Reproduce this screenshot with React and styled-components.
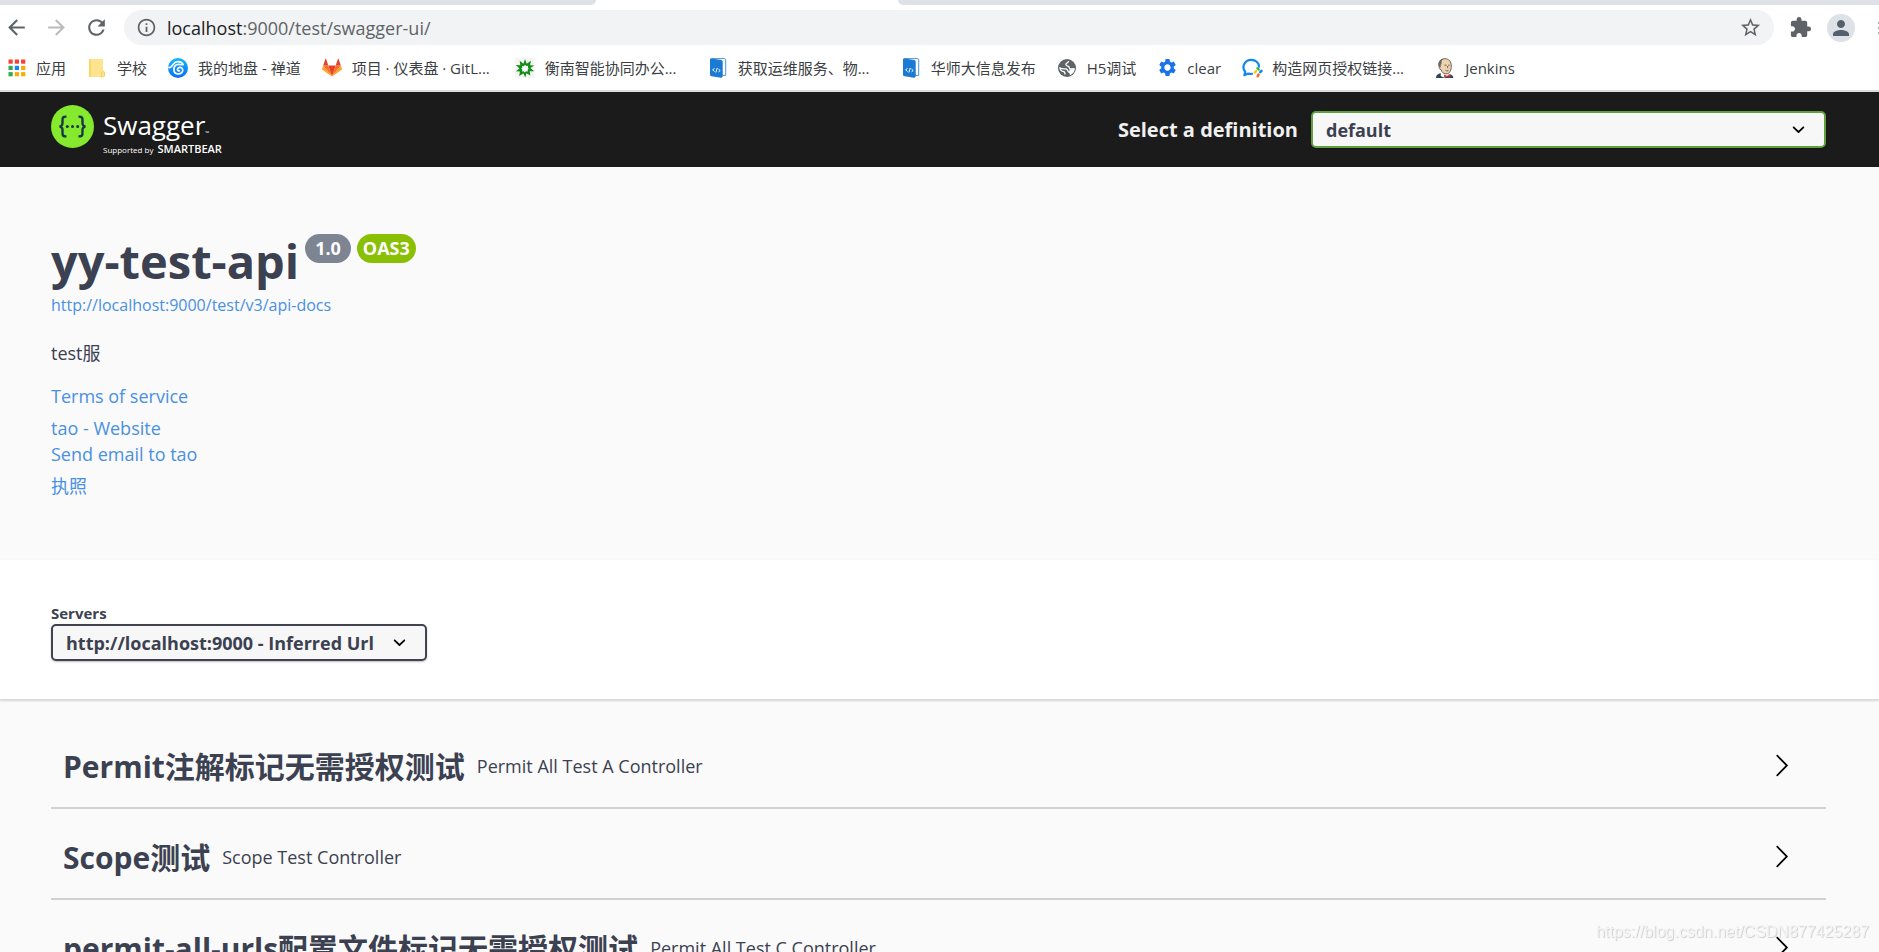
import styled, { createGlobalStyle } from 'styled-components'
import {
  MdArrowBack,
  MdArrowForward,
  MdExtension,
  MdInfoOutline,
  MdMoreVert,
  MdPerson,
  MdRefresh,
  MdSettings,
  MdStarBorder,
} from 'react-icons/md'

const TAGS = [
  { name: 'Permit注解标记无需授权测试', description: 'Permit All Test A Controller' },
  { name: 'Scope测试', description: 'Scope Test Controller' },
  { name: 'permit-all-urls配置文件标记无需授权测试', description: 'Permit All Test C Controller' },
]

const BOOKMARKS = [
  { label: '应用', icon: <AppsIcon /> },
  { label: '学校', icon: <FolderIcon /> },
  { label: '我的地盘 - 禅道', icon: <ZentaoIcon /> },
  { label: '项目 · 仪表盘 · GitL...', icon: <GitlabIcon />, clipped: true },
  { label: '衡南智能协同办公...', icon: <StarburstIcon />, clipped: true },
  { label: '获取运维服务、物...', icon: <BookIcon />, clipped: true },
  { label: '华师大信息发布', icon: <BookIcon /> },
  { label: 'H5调试', icon: <GlobeIcon /> },
  { label: 'clear', icon: <MdSettings color="#1a73e8" size={21} /> },
  { label: '构造网页授权链接...', icon: <WecomIcon />, clipped: true },
  { label: 'Jenkins', icon: <JenkinsIcon /> },
]

export default function App() {
  return (
    <Browser>
      <GlobalStyle />
      <TabStrip>
        <TabsBefore />
        <ActiveTab />
        <TabsAfter />
      </TabStrip>
      <Toolbar>
        <ToolButton aria-label="Back">
          <MdArrowBack size={25} />
        </ToolButton>
        <ToolButton aria-label="Forward" disabled>
          <MdArrowForward size={25} />
        </ToolButton>
        <ToolButton aria-label="Reload">
          <MdRefresh size={25} />
        </ToolButton>
        <AddressBar>
          <MdInfoOutline size={21} />
          <Address>
            <Host>localhost</Host>:9000/test/swagger-ui/
          </Address>
          <ToolButton aria-label="Bookmark this page">
            <MdStarBorder size={23} />
          </ToolButton>
        </AddressBar>
        <ToolButton aria-label="Extensions">
          <MdExtension size={23} />
        </ToolButton>
        <Avatar aria-label="Profile">
          <MdPerson size={24} />
        </Avatar>
        <ToolButton aria-label="Menu">
          <MdMoreVert size={20} />
        </ToolButton>
      </Toolbar>
      <BookmarksBar>
        {BOOKMARKS.map(({ label, icon, clipped }) => (
          <Bookmark key={label} href="#">
            <BookmarkIcon>{icon}</BookmarkIcon>
            <BookmarkLabel $clipped={clipped}>{label}</BookmarkLabel>
          </Bookmark>
        ))}
      </BookmarksBar>
      <Page>
        <Topbar>
          <TopbarWrapper>
            <Logo href="#" aria-label="Swagger">
              <SwaggerMark />
              <LogoText>
                <LogoName>
                  Swagger<Trademark>™</Trademark>
                </LogoName>
                <Supported>
                  Supported by <SmartBear>SMARTBEAR</SmartBear>
                </Supported>
              </LogoText>
            </Logo>
            <Definition>
              <DefinitionLabel htmlFor="definition">
                Select a definition
              </DefinitionLabel>
              <SelectBox $grow>
                <Select id="definition" $color="#62a03f">
                  <option>default</option>
                </Select>
                <SelectArrow />
              </SelectBox>
            </Definition>
          </TopbarWrapper>
        </Topbar>
        <Info>
          <Wrapper>
            <TitleRow>
              <Title>yy-test-api</Title>
              <Badge $color="#7d8492" $padding="10px">1.0</Badge>
              <Badge $color="#89bf04" $padding="6px">OAS3</Badge>
            </TitleRow>
            <SpecLink href="#">http://localhost:9000/test/v3/api-docs</SpecLink>
            <Description>test服</Description>
            <InfoLinks>
              <InfoLink href="#">Terms of service</InfoLink>
              <Contact>
                <InfoLink href="#">tao - Website</InfoLink>
                <InfoLink href="#">Send email to tao</InfoLink>
              </Contact>
              <InfoLink href="#">执照</InfoLink>
            </InfoLinks>
          </Wrapper>
        </Info>
        <Scheme>
          <Wrapper>
            <ServersLabel htmlFor="servers">Servers</ServersLabel>
            <SelectBox>
              <Select id="servers" $color="#41444e">
                <option>http://localhost:9000 - Inferred Url</option>
              </Select>
              <SelectArrow />
            </SelectBox>
          </Wrapper>
        </Scheme>
        <Operations>
          <Wrapper>
            {TAGS.map(({ name, description }) => (
              <TagRow key={name}>
                <TagName>{name}</TagName>
                <TagDescription>{description}</TagDescription>
                <ExpandButton aria-label="Expand operation">
                  <LargeArrow />
                </ExpandButton>
              </TagRow>
            ))}
          </Wrapper>
        </Operations>
      </Page>
      <Watermark>https://blog.csdn.net/CSDN877425287</Watermark>
    </Browser>
  )
}

function SelectArrow() {
  return (
    <ArrowSvg viewBox="0 0 20 20" aria-hidden="true">
      <path d="M13.418 7.859c.271-.268.709-.268.978 0 .27.268.272.701 0 .969l-3.908 3.83c-.27.268-.707.268-.979 0l-3.908-3.83c-.27-.267-.27-.701 0-.969.271-.268.709-.268.978 0L10 11l3.418-3.141z" />
    </ArrowSvg>
  )
}

function LargeArrow() {
  return (
    <svg width="25" height="25" viewBox="0 0 20 20">
      <path d="M13.25 10L6.109 2.58c-.268-.27-.268-.707 0-.979.268-.27.701-.27.969 0l7.83 7.908c.268.271.268.709 0 .979l-7.83 7.908c-.268.271-.701.27-.969 0-.268-.269-.268-.707 0-.979L13.25 10z" />
    </svg>
  )
}

function SwaggerMark() {
  return (
    <svg width="43" height="43" viewBox="0 0 43 43">
      <circle cx="21.5" cy="21.5" r="21.5" fill="#85ea2d" />
      <g fill="none" stroke="#173647" strokeWidth="2.4">
        <path d="M15.5 11.6c-3.4-.2-4.2 1-4 4 .2 3.4.1 5.4-2.9 5.9 3 .5 3.1 2.5 2.9 5.9-.2 3 .6 4.2 4 4" />
        <path d="M27.5 11.6c3.4-.2 4.2 1 4 4-.2 3.4-.1 5.4 2.9 5.9-3 .5-3.1 2.5-2.9 5.9.2 3-.6 4.2-4 4" />
      </g>
      <g fill="#173647">
        <circle cx="16.3" cy="21.5" r="1.5" />
        <circle cx="21.5" cy="21.5" r="1.5" />
        <circle cx="26.7" cy="21.5" r="1.5" />
      </g>
    </svg>
  )
}

function AppsIcon() {
  const colors = [
    '#f44336', '#f44336', '#f44336',
    '#34a853', '#1a85f2', '#fbab05',
    '#34a853', '#fbab05', '#fbab05',
  ]
  return (
    <svg width="20" height="20" viewBox="0 0 20 20">
      {colors.map((fill, i) => (
        <rect
          key={i}
          x={2.5 + (i % 3) * 6.3}
          y={1.5 + Math.floor(i / 3) * 6.3}
          width="4.2"
          height="4.2"
          fill={fill}
        />
      ))}
    </svg>
  )
}

function FolderIcon() {
  return (
    <svg width="20" height="20" viewBox="0 0 20 20">
      <path d="M3 1h12a1 1 0 0 1 1 1v10l2 2v4l-1 1H3a1 1 0 0 1-1-1V2a1 1 0 0 1 1-1z" fill="#ffe48f" />
      <path d="M2 2v16a1 1 0 0 0 1 1h1V1H3a1 1 0 0 0-1 1z" fill="#fbd75f" />
      <path d="M14.5 19v-4l1.500-1.500 1.500 1v3.500l-1 1z" fill="#ffe48f" stroke="#efc94c" strokeWidth=".7" />
    </svg>
  )
}

function ZentaoIcon() {
  return (
    <svg width="20" height="20" viewBox="0 0 20 20">
      <defs>
        <linearGradient id="zentao" x1="0" y1="0" x2="0" y2="1">
          <stop offset="0" stopColor="#12b9fb" />
          <stop offset="1" stopColor="#0c6cf5" />
        </linearGradient>
      </defs>
      <circle cx="10" cy="10" r="10" fill="url(#zentao)" />
      <g fill="none" stroke="#fff" strokeWidth="1.7" strokeLinecap="round">
        <path d="M.9 9.500c2.400.4 3.100-1.500 4.300-3.300 2.500-3.400 7.800-3.300 9.900.2" />
        <path d="M15.100 6.400c-2 .8-3.600-.5-5.800.1-4.600 1.500-4.600 8.900.3 9.400 3.500.4 6-2.300 4.900-4.900-1-2.200-4.500-2.200-5 .2-.2 1.200.8 2.100 1.900 1.600" />
      </g>
    </svg>
  )
}

function GitlabIcon() {
  return (
    <svg width="20" height="20" viewBox="0 0 20 20">
      <path d="M10 18.500L13.700 7.500H6.300z" fill="#e24329" />
      <path d="M10 18.500L6.300 7.500H1.200z" fill="#fc6d26" />
      <path d="M1.200 7.500L.1 10.900c-.1.300 0 .6.300.8l9.600 6.800z" fill="#fca326" />
      <path d="M1.200 7.500h5.100L4.100 1c-.1-.4-.6-.4-.7 0z" fill="#e24329" />
      <path d="M10 18.500l3.700-11h5.100z" fill="#fc6d26" />
      <path d="M18.800 7.500l1.100 3.400c.1.300 0 .6-.3.800L10 18.500z" fill="#fca326" />
      <path d="M18.800 7.500h-5.100L15.900 1c.1-.4.600-.4.700 0z" fill="#e24329" />
    </svg>
  )
}

function StarburstIcon() {
  return (
    <svg width="20" height="20" viewBox="0 0 20 20">
      <rect width="20" height="20" fill="#f5f5f5" />
      <path
        d="M10 1l1.600 4.800 4.400-3-1 4.400 4.200.2-3.700 2.600 3.600 3.200-4.400.1.600 4.300-3.900-2.400L10.300 19.500l-1.900-4.100-4.200 2.500.7-4.500-4.100-.2L4.500 10.400.8 7l4.500.3-.6-4.600 3.700 3.100z"
        fill="#128d16"
      />
      <path d="M10 6.800l1.200 1.300 2-.3-.4 1.900 1 1-1.200 1 .3 1.700-1.900-.1-1.100 1.300-1.100-1.400-1.800.2.300-1.800-1.200-1 1.300-.9-.4-1.800 1.900.3z" fill="#fff" />
    </svg>
  )
}

function BookIcon() {
  return (
    <svg width="20" height="20" viewBox="0 0 20 20">
      <path d="M4 .6h12.200c.9 0 1.500.5 1.500 1.300v15.500h-3z" fill="#fff" stroke="#1b7ad3" strokeWidth=".8" />
      <path d="M2 1.800C2 .8 2.800.2 3.800.4l9.300 1.600c1 .2 1.600.8 1.600 1.800v14.500c0 1-.8 1.600-1.800 1.400l-9.300-1.500c-1-.2-1.600-.8-1.600-1.800z" fill="#1b7ad3" />
      <path d="M6.500 10.500l-1.800 1.300 1.800 1.700M10.500 11l1.700 1.600-1.700 1.300M9.300 10l-1.500 4.500" fill="none" stroke="#fff" strokeWidth="1" />
    </svg>
  )
}

function GlobeIcon() {
  return (
    <svg width="20" height="20" viewBox="0 0 20 20">
      <circle cx="10" cy="10" r="9" fill="#5f6368" />
      <path d="M11.500 3.200c-.2 1.700-1.400 1.600-2.200 2.300-.9.900-.3 2.200 1 2.300 1.400.1 2 .7 2 2 0 1 .9 1.300 2 1.200l2.900-.3c-.3 2.700-1.700 4.600-3.900 5.600.3-1.700-.6-2.200-1.700-2.500-1.200-.4-.7-2.100-2-2.700-1.700-.7-3.900.7-6.700-1.300.3 2.700 2 3.600 3.700 3.800 1.200.2 1.500 1 1.400 2.900" fill="none" stroke="#fff" strokeWidth="1.3" strokeLinejoin="round" />
      <path d="M12.600 11.600l4.300-.7c-.4 2.400-1.500 4.100-3.300 5.200-.1-1.200-.5-1.900-1.500-2.200z" fill="#fff" />
    </svg>
  )
}

function WecomIcon() {
  return (
    <svg width="21" height="20" viewBox="0 0 21 20">
      <path d="M10 15.800c-1.300.3-2.700.2-3.900-.2l-3.700 1.600.8-3.400C-.9 8.700 2.700 1.800 9.300 1.800c4.300 0 7.700 3 7.700 7" fill="none" stroke="#1187f1" strokeWidth="2.2" strokeLinejoin="round" strokeLinecap="round" />
      <g strokeWidth="2.4" strokeLinecap="round">
        <path d="M15.500 10.200l1.200 1.300" stroke="#32bc3c" />
        <path d="M19.500 12.800l-1.300 1.300" stroke="#1187f1" />
        <path d="M12.800 14.500l1.400-1.400" stroke="#fcc500" />
        <path d="M15.700 18.200l.9-1.800" stroke="#fb6420" />
      </g>
    </svg>
  )
}

function JenkinsIcon() {
  return (
    <svg width="20" height="20" viewBox="0 0 20 20">
      <path d="M1 20c.1-2.700 1.200-4 4.300-4.800l10 1.300c2 .5 2.900 1.600 3 3.500z" fill="#2b4558" />
      <path d="M6 13.500l-.3 4.500 3.600 1.800 4.600-2.300-.7-3z" fill="#fff" />
      <path d="M4 8.500C3 3.500 6 .7 9.800.7c4.200 0 6.500 2.900 6.500 7.300 0 4-1.300 7.800-5.200 7.800-2.800 0-4.300-1.500-5.100-4.200-1.200.2-1.800-1.800-2-3.100z" fill="#efd2b0" stroke="#4a4037" strokeWidth=".8" />
      <path d="M4.100 8.800C2.500 4 5.200.8 8.600.7 6.600 2 6.200 4 6.600 6.300l-1 .5.300 2.700z" fill="#6a6862" />
      <path d="M9.500 7.200h2M13.200 7.200h1.500M12.700 8v2.200M10.500 12.400c1.200.7 2.300.5 3-.2" fill="none" stroke="#4a4037" strokeWidth=".8" />
      <path d="M9 16.500l3 1.200 3.300-1.500.3 3.300-3.500-.9-3 1.200z" fill="#d33833" />
    </svg>
  )
}

const GlobalStyle = createGlobalStyle`
  *,
  *::before,
  *::after {
    box-sizing: border-box;
  }

  body {
    margin: 0;
    background: #fff;
    color: #3b4151;
    font-family: 'Open Sans', 'Noto Sans CJK SC', sans-serif;
  }

  button,
  select {
    font-family: inherit;
  }

  svg {
    display: block;
    flex-shrink: 0;
  }
`

const Browser = styled.div`
  display: flex;
  flex-direction: column;
  height: 100vh;
  overflow: hidden;
`

const TabStrip = styled.div`
  display: flex;
  flex-shrink: 0;
  height: 5px;
`

const TabsBefore = styled.div`
  flex: 0 1 596px;
  background: #dee1e6;
  border-bottom-right-radius: 5px;
`

const ActiveTab = styled.div`
  flex: 0 1 302px;
  background: #fff;
`

const TabsAfter = styled.div`
  flex: 1;
  background: #dee1e6;
  border-bottom-left-radius: 5px;
`

const Toolbar = styled.div`
  display: flex;
  flex-shrink: 0;
  align-items: center;
  gap: 15px;
  padding: 5px 0 0 4px;
  margin-right: -11px;
`

const ToolButton = styled.button`
  display: flex;
  padding: 0;
  border: 0;
  background: none;
  color: #5f6368;
  cursor: pointer;

  &:disabled {
    color: #babcbe;
    cursor: default;
  }
`

const AddressBar = styled.div`
  display: flex;
  flex: 1;
  align-items: center;
  gap: 10px;
  height: 35px;
  padding: 0 12px;
  border-radius: 18px;
  background: #f1f3f4;
  color: #5f6368;
`

const Address = styled.span`
  flex: 1;
  font-size: 18px;
  line-height: 24px;
`

const Host = styled.span`
  color: #202124;
`

const Avatar = styled.button`
  display: flex;
  align-items: center;
  justify-content: center;
  width: 28px;
  height: 28px;
  padding: 0;
  border: 0;
  border-radius: 50%;
  background: #dee1e6;
  color: #55606f;
`

const BookmarksBar = styled.nav`
  display: flex;
  flex-shrink: 0;
  align-items: center;
  gap: 21px;
  height: 47px;
  padding: 0 6px;
  border-bottom: 2px solid #dadce0;
`

const Bookmark = styled.a`
  display: flex;
  align-items: center;
  gap: 10px;
  color: #3c4043;
  text-decoration: none;
  white-space: nowrap;
`

const BookmarkIcon = styled.span`
  display: flex;
  justify-content: center;
  width: 20px;
`

const BookmarkLabel = styled.span`
  width: ${({ $clipped }) => ($clipped ? '142px' : 'auto')};
  font-size: 15px;
  line-height: 20px;
`

const Page = styled.main`
  flex: 1;
  min-height: 0;
  overflow: hidden;
`

const Wrapper = styled.div`
  width: 100%;
  max-width: 1825px;
  margin: 0 auto;
  padding: 0 26px 0 24px;
`

const Topbar = styled.header`
  padding: 12px 0;
  background: #1b1b1b;
`

const TopbarWrapper = styled(Wrapper)`
  display: flex;
  align-items: center;
`

const Logo = styled.a`
  display: flex;
  flex: 1;
  gap: 9px;
  height: 51px;
  padding-top: 1px;
  color: #fff;
  text-decoration: none;
`

const LogoText = styled.span`
  display: flex;
  flex-direction: column;
`

const LogoName = styled.span`
  font-size: 26px;
  font-weight: 400;
  line-height: 40px;
`

const Trademark = styled.span`
  font-size: 5px;
  line-height: 1;
`

const Supported = styled.span`
  font-size: 8px;
  line-height: 8px;
`

const SmartBear = styled.b`
  margin-left: 2px;
  font-size: 11px;
  font-weight: 600;
  line-height: 8px;
`

const Definition = styled.div`
  display: flex;
  flex: 0 1 710px;
  align-items: center;
  gap: 13px;
`

const DefinitionLabel = styled.label`
  flex: 1;
  color: #f0f0f0;
  font-size: 20px;
  font-weight: 700;
  text-align: right;
  white-space: nowrap;
`

/* select and arrow share one grid cell */
const SelectBox = styled.div`
  display: inline-grid;
  flex: ${({ $grow }) => ($grow ? '0 1 515px' : 'none')};
  align-items: center;
  justify-items: end;

  > * {
    grid-area: 1 / 1;
  }
`

const Select = styled.select`
  width: 100%;
  height: 37px;
  padding: 0 50px 0 13px;
  border: 2px solid ${({ $color }) => $color};
  border-radius: 5px;
  background: #f7f7f7;
  box-shadow: 0 1px 2px rgba(0, 0, 0, 0.25);
  color: #3b4151;
  font-size: 18px;
  font-weight: 700;
  appearance: none;
`

const ArrowSvg = styled.svg`
  width: 25px;
  height: 25px;
  margin-right: 15px;
  pointer-events: none;
`

const Info = styled.section`
  padding: 64px 0 62px;
  background: #fafafa;
`

const TitleRow = styled.div`
  display: flex;
  align-items: flex-start;
  gap: 6px;
`

const Title = styled.h2`
  margin: 0;
  font-size: 47px;
  font-weight: 700;
  line-height: 60px;
`

const Badge = styled.span`
  margin-top: 3px;
  padding: 0 ${({ $padding }) => $padding};
  border-radius: 15px;
  background: ${({ $color }) => $color};
  color: #fff;
  font-size: 18px;
  font-weight: 700;
  line-height: 29px;
`

const SpecLink = styled.a`
  display: block;
  margin-top: 4px;
  color: #4990e2;
  font-size: 16px;
  line-height: 20px;
  text-decoration: none;
`

const Description = styled.p`
  margin: 26px 0 19px;
  font-size: 18px;
  line-height: 24px;
`

const InfoLinks = styled.div`
  display: flex;
  flex-direction: column;
  align-items: flex-start;
  gap: 8px;
`

const Contact = styled.div`
  display: flex;
  flex-direction: column;
  align-items: flex-start;
  gap: 2px;
`

const InfoLink = styled.a`
  color: #4990e2;
  font-size: 18px;
  line-height: 24px;
  text-decoration: none;
`

const Scheme = styled.section`
  position: relative;
  padding: 43px 0 38px;
  border-bottom: 1px solid #dadada;
  background: #fff;
  box-shadow: 0 1px 2px rgba(0, 0, 0, 0.15);
`

const ServersLabel = styled.label`
  display: block;
  margin-bottom: 1px;
  font-size: 15px;
  font-weight: 700;
  line-height: 20px;
`

const Operations = styled.section`
  padding: 18px 0 40px;
  background: #fafafa;
`

const TagRow = styled.div`
  display: flex;
  align-items: center;
  gap: 12px;
  height: 91px;
  padding: 5px 32px 0 12px;
  border-bottom: 2px solid #d0d1d4;
`

const TagName = styled.h3`
  margin: 0;
  padding-top: 4px;
  font-size: 30px;
  font-weight: 700;
  line-height: 40px;
`

const TagDescription = styled.small`
  flex: 1;
  padding-top: 2px;
  font-size: 18px;
  line-height: 24px;
`

const ExpandButton = styled.button`
  padding: 0;
  border: 0;
  background: none;
  cursor: pointer;
`

const Watermark = styled.div`
  position: fixed;
  right: 10px;
  bottom: 10px;
  color: #f4f4f4;
  font-family: 'Liberation Sans', sans-serif;
  font-size: 16px;
  line-height: 20px;
  text-shadow: 1px 1px 1px rgba(0, 0, 0, 0.18);
`
